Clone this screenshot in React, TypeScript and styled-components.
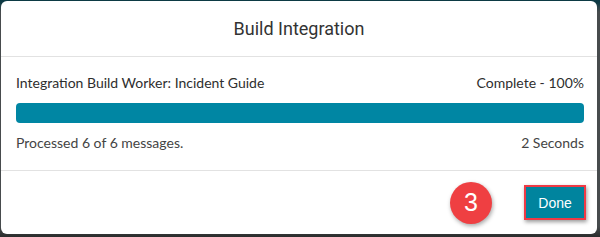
import styled, { createGlobalStyle } from 'styled-components';

const GlobalStyle = createGlobalStyle`
    html, body {
        margin: 0;
        padding: 0;
        background: #3f4648;
    }
    body {
        width: 600px;
        height: 237px;
        overflow: hidden;
        background: linear-gradient(180deg, #0c3a44 0px, #0c3a44 2px, #474b4d 12px, #474b4d 226px, #2a2c2c 237px);
    }
`;

function App() {
    return (
        <>
            <GlobalStyle />
            <Page>
                <Dialog>
                    <Header>Build Integration</Header>
                    <Body>
                        <Row>
                            <Label>Integration Build Worker: Incident Guide</Label>
                            <Label>Complete - 100%</Label>
                        </Row>
                        <Track>
                            <Fill style={{ width: '100%' }} />
                        </Track>
                        <Row>
                            <Muted>Processed 6 of 6 messages.</Muted>
                            <Muted>2 Seconds</Muted>
                        </Row>
                    </Body>
                    <Footer>
                        <Step>3</Step>
                        <DoneButton>Done</DoneButton>
                    </Footer>
                </Dialog>
            </Page>
        </>
    );
}

const Page = styled.div`
    padding: 1px 3px 3px 1px;
    height: 237px;
    box-sizing: border-box;
`;

const Dialog = styled.div`
    background: #fff;
    border-radius: 6px;
    height: 233px;
    display: flex;
    flex-direction: column;
    overflow: hidden;
`;

const Header = styled.div`
    height: 56px;
    border-bottom: 1px solid #e2e2e2;
    display: flex;
    align-items: center;
    justify-content: center;
    font-family: Roboto, "Noto Sans", sans-serif;
    font-size: 18px;
    font-weight: 400;
    color: #333;
    padding-bottom: 1px;
    box-sizing: border-box;
`;

const Body = styled.div`
    padding: 18px 13px 0 15px;
    height: 114px;
    border-bottom: 1px solid #e2e2e2;
    box-sizing: border-box;
`;

const Row = styled.div`
    display: flex;
    justify-content: space-between;
    align-items: center;
`;

const Label = styled.span`
    font-family: Lato, "Open Sans", sans-serif;
    font-size: 14px;
    color: #2e2e2e;
    line-height: 16px;
`;

const Muted = styled(Label)`
    color: #444;
`;

const Track = styled.div`
    height: 20px;
    margin: 12px 0 12px 0;
    background: #e9ecef;
    border-radius: 4px;
    overflow: hidden;
`;

const Fill = styled.div`
    height: 100%;
    background: #0086a3;
`;

const Footer = styled.div`
    flex: 1;
    display: flex;
    align-items: center;
    justify-content: flex-end;
    gap: 32px;
    padding: 0 11px 0 0;
`;

const Step = styled.div`
    width: 42px;
    height: 42px;
    border-radius: 50%;
    background: #ef3f42;
    box-shadow: 1px 2px 4px rgba(0, 0, 0, 0.35);
    color: #fff;
    font-family: "Liberation Sans", Arial, sans-serif;
    font-size: 25px;
    display: flex;
    align-items: center;
    justify-content: center;
`;

const DoneButton = styled.button`
    width: 62px;
    height: 35px;
    background: #00849e;
    border: 2px solid #ef3a45;
    color: #fff;
    font-family: "Liberation Sans", Arial, sans-serif;
    font-size: 14px;
    box-shadow: 1px 2px 4px rgba(0, 0, 0, 0.4);
    padding: 0;
`;

export default App;
